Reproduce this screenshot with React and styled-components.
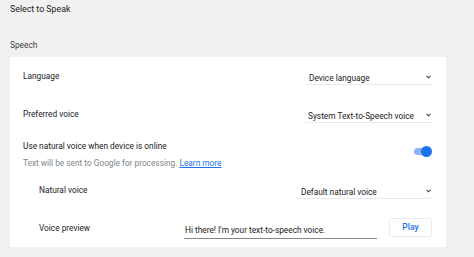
import React from "react";
import styled, { createGlobalStyle } from "styled-components";

const Global = createGlobalStyle`
  html, body { margin: 0; padding: 0; background: #f1f1f1; }
  body { font-family: Roboto, "Noto Sans", Arial, sans-serif; color: #202124; }
`;

const Page = styled.div`
  width: 474px;
  height: 257px;
  background: #f1f1f1;
  box-sizing: border-box;
  padding: 0 28px 0 10px;
  overflow: hidden;
`;

const Title = styled.div`
  font-size: 8.8px;
  line-height: 18px;
  color: #202124;
`;

const SectionHeader = styled.div`
  font-size: 8.3px;
  line-height: 12px;
  color: #3c4043;
  margin-top: 21px;
  margin-bottom: 6px;
`;

const Card = styled.div`
  background: #fff;
  height: 190px;
  display: flex;
  flex-direction: column;
`;

const Row = styled.div`
  height: 38px;
  box-sizing: border-box;
  display: flex;
  align-items: ${(p) => (p.$top ? "flex-start" : "center")};
  justify-content: space-between;
  padding: ${(p) => (p.$top ? "5px" : "0")} 14px 0 ${(p) => (p.$indent ? 29 : 13)}px;
`;

const Label = styled.div`
  font-size: 8.3px;
  line-height: 12px;
  color: #202124;
`;

const TextBlock = styled.div`
  display: flex;
  flex-direction: column;
`;

const Line = styled.div`
  font-size: 8.3px;
  line-height: 17px;
  color: ${(p) => (p.$secondary ? "#80868b" : "#202124")};
`;

const Link = styled.a`
  color: #1a73e8;
  text-decoration: underline;
`;

const Select = styled.div`
  width: ${(p) => p.$w}px;
  box-sizing: border-box;
  display: flex;
  align-items: center;
  justify-content: space-between;
  padding: 0 0 0 ${(p) => p.$pl}px;
  height: 14px;
  margin-top: 4px;
  border-bottom: 1px solid #e8eaed;
  font-size: 8.3px;
  color: #202124;
`;

const Chevron = styled.svg`
  width: 5px;
  height: 4px;
  margin-right: 1px;
  margin-bottom: 1px;
`;

const Toggle = styled.div`
  position: relative;
  width: 17px;
  height: 7px;
  margin-top: 10px;
  margin-right: 1px;
  border-radius: 4px;
  background: #8ab4f8;
`;

const Knob = styled.div`
  position: absolute;
  right: -1px;
  top: -2px;
  width: 11px;
  height: 11px;
  border-radius: 50%;
  background: #1a73e8;
`;

const PreviewGroup = styled.div`
  display: flex;
  align-items: center;
  gap: 12px;
`;

const Input = styled.div`
  width: 193px;
  height: 18px;
  box-sizing: border-box;
  padding: 3px 0 0 1px;
  margin-top: 4px;
  border-bottom: 1px solid #80868b;
  font-size: 8.3px;
  line-height: 12px;
  color: #202124;
`;

const PlayButton = styled.button`
  width: 43px;
  height: 19px;
  box-sizing: border-box;
  background: #fff;
  border: 1px solid #e8eaed;
  border-radius: 3px;
  color: #1a73e8;
  font-family: Roboto, sans-serif;
  font-weight: 500;
  font-size: 8.5px;
  padding: 0;
  margin-top: -2px;
`;

const ChevronIcon = () => (
  <Chevron viewBox="0 0 5 4">
    <path d="M0.5 0.8 L2.5 2.8 L4.5 0.8" fill="none" stroke="#3c4043" strokeWidth="1.1" />
  </Chevron>
);

export default function App() {
  return (
    <>
      <Global />
      <Page>
        <Title>Select to Speak</Title>
        <SectionHeader>Speech</SectionHeader>
        <Card>
          <Row>
            <Label>Language</Label>
            <Select $w={126} $pl={3}>
              Device language
              <ChevronIcon />
            </Select>
          </Row>
          <Row>
            <Label>Preferred voice</Label>
            <Select $w={127} $pl={3}>
              System Text-to-Speech voice
              <ChevronIcon />
            </Select>
          </Row>
          <Row $top>
            <TextBlock>
              <Line>Use natural voice when device is online</Line>
              <Line $secondary>
                Text will be sent to Google for processing. <Link>Learn more</Link>
              </Line>
            </TextBlock>
            <Toggle>
              <Knob />
            </Toggle>
          </Row>
          <Row $indent>
            <Label>Natural voice</Label>
            <Select $w={136} $pl={5}>
              Default natural voice
              <ChevronIcon />
            </Select>
          </Row>
          <Row $indent>
            <Label>Voice preview</Label>
            <PreviewGroup>
              <Input>Hi there! I'm your text-to-speech voice.</Input>
              <PlayButton>Play</PlayButton>
            </PreviewGroup>
          </Row>
        </Card>
      </Page>
    </>
  );
}
